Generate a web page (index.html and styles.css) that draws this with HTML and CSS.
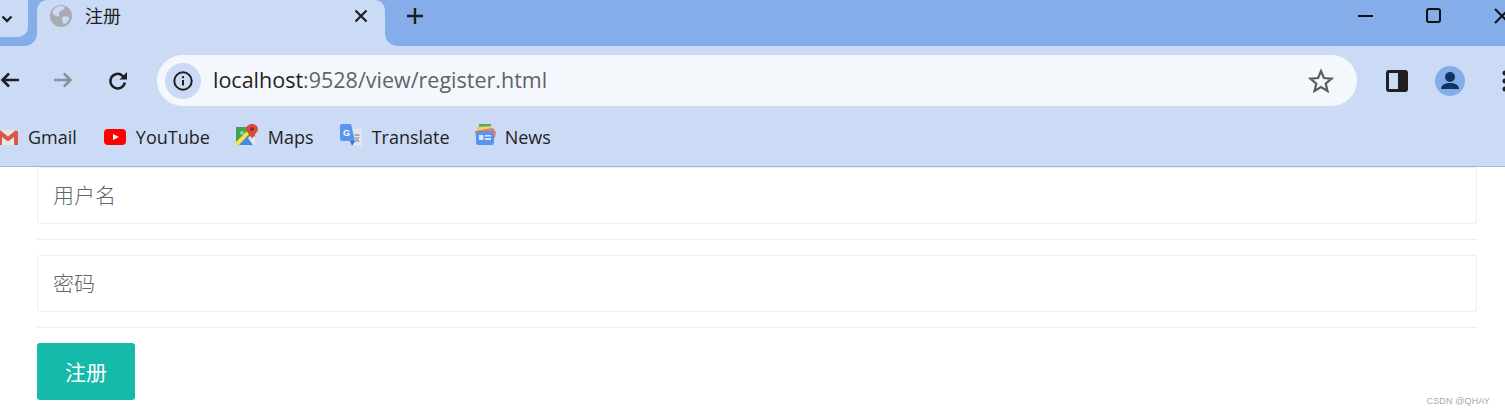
FILE: index.html
```html
<!DOCTYPE html>
<html lang="zh-CN">
<head>
    <meta charset="UTF-8">
    <title>注册</title>
    <link rel="stylesheet" href="styles.css">
</head>
<body>
    <header class="browser">
        <div class="tab-strip">
            <div class="tab-list-btn">
                <svg width="14" height="14" viewBox="0 0 14 14"><path d="M2.500 4.500 7 9l4.500-4.500" fill="none" stroke="#1f1f1f" stroke-width="2.400"/></svg>
            </div>
            <div class="tab">
                <svg class="tab-globe" width="22" height="22" viewBox="0 0 22 22">
                    <circle cx="11" cy="11" r="11" fill="#a9adb3"/>
                    <path d="M6 2.500c2.500-1.500 6-1.800 8.500-.8.300 1.800-1 3.300-3 3.800-1.200 1-2.500 1.500-2.500 3 .8 1.500 0 3.200-1.500 3-2-.5-3.800-1.800-5-3.500.2-2.300 1.500-4.200 3.500-5.500zM13 12c2-.8 4.500-.5 6.500 1-1 3-3 5.200-5.500 6.300-1.300-.8-1-2.500-1.800-3.800-.7-1.200-.2-2.900.8-3.500z" fill="#cbdbf5"/>
                </svg>
                <span class="tab-title">注册</span>
                <svg class="tab-close" width="14" height="14" viewBox="0 0 14 14"><path d="M1.500 1.500l11 11M12.500 1.500l-11 11" stroke="#1f1f1f" stroke-width="2.200"/></svg>
            </div>
            <svg class="new-tab" width="16" height="16" viewBox="0 0 16 16"><path d="M8 0v16M0 8h16" stroke="#1f1f1f" stroke-width="2.400"/></svg>
            <div class="window-btns">
                <svg width="16" height="16" viewBox="0 0 16 16"><path d="M0 8h15" stroke="#111" stroke-width="2"/></svg>
                <svg width="16" height="16" viewBox="0 0 16 16"><rect x="1" y="1" width="13" height="13" rx="2" fill="none" stroke="#111" stroke-width="2"/></svg>
                <svg width="16" height="16" viewBox="0 0 16 16"><path d="M1 1l14 14M15 1 1 15" stroke="#111" stroke-width="2"/></svg>
            </div>
        </div>

        <div class="toolbar">
            <svg class="nav-icon" width="20" height="18" viewBox="0 0 20 18"><path d="M19 9H3M9 2.500 2.500 9 9 15.500" fill="none" stroke="#1f1f1f" stroke-width="2.500"/></svg>
            <svg class="nav-icon" width="20" height="18" viewBox="0 0 20 18"><path d="M1 9h16M11 2.500 17.500 9 11 15.500" fill="none" stroke="#8a8f99" stroke-width="2.500"/></svg>
            <svg class="nav-icon" width="20" height="20" viewBox="0 0 20 20"><path d="M16.800 11.500a7.300 7.300 0 1 1-2.200-6.700L17 7" fill="none" stroke="#1f1f1f" stroke-width="2.500"/><path d="M19 1v7.500h-7.500z" fill="#1f1f1f"/></svg>
            <div class="omnibox">
                <span class="site-info">
                    <svg width="20" height="20" viewBox="0 0 20 20"><circle cx="10" cy="10" r="8.700" fill="none" stroke="#1f1f1f" stroke-width="2"/><path d="M10 9v5.500" stroke="#1f1f1f" stroke-width="2"/><rect x="9" y="5.200" width="2" height="2" fill="#1f1f1f"/></svg>
                </span>
                <span class="url"><span class="url-host">localhost</span>:9528/view/register.html</span>
                <svg class="star" width="26" height="25" viewBox="0 0 26 25"><path d="M13 3l2.900 7 7.600.6-5.800 5 1.800 7.400L13 19.100 6.500 23l1.800-7.400-5.800-5 7.600-.6z" fill="none" stroke="#5a5d63" stroke-width="2.200"/></svg>
            </div>
            <svg class="side-panel" width="22" height="22" viewBox="0 0 22 22"><rect width="22" height="22" rx="3" fill="#1f1f1f"/><rect x="3" y="3" width="9" height="16" fill="#cbdbf5"/></svg>
            <svg class="avatar" width="30" height="30" viewBox="0 0 30 30"><circle cx="15" cy="15" r="15" fill="#84adea"/><circle cx="15" cy="11" r="5" fill="#0f3566"/><path d="M6 23c0-4.500 5-6 9-6s9 1.500 9 6z" fill="#0f3566"/></svg>
            <svg class="menu-dots" width="6" height="22" viewBox="0 0 6 22"><circle cx="3" cy="3" r="2.500" fill="#1f1f1f"/><circle cx="3" cy="11" r="2.500" fill="#1f1f1f"/><circle cx="3" cy="19" r="2.500" fill="#1f1f1f"/></svg>
        </div>

        <nav class="bookmarks">
            <a class="bookmark bm-gmail">
                <svg width="20" height="16" viewBox="0 0 20 16"><path d="M1 1h18v15H1z" fill="#e6e6e6"/><path d="M0 3v13h4V8l6 4.500L16 8v8h4V3l-2-2-8 6.500L2 1z" fill="#d9584a"/></svg>
                Gmail
            </a>
            <a class="bookmark">
                <svg width="22" height="16" viewBox="0 0 22 16"><rect width="22" height="16" rx="4" fill="#f00"/><path d="M9 5l6 3-6 3z" fill="#fff"/></svg>
                YouTube
            </a>
            <a class="bookmark">
                <svg class="bm-tall" width="22" height="22" viewBox="0 0 22 22">
                    <path d="M0 3h19v18H0z" fill="#3aa757"/>
                    <circle cx="6" cy="9" r="2" fill="#8fd19e"/>
                    <path d="M2 21 11 12l8 9z" fill="#4a86e8"/>
                    <path d="M0 18 13 5l2 3L3 21H0z" fill="#fbe14b"/>
                    <path d="M12 14l3-3 4 2v8h-2z" fill="#e4e7ec"/>
                    <path d="M16 0c3.300 0 6 2.300 6 5.200 0 3-4 5-6 9.800-2-4.800-6-6.800-6-9.800C10 2.300 12.700 0 16 0z" fill="#dd4b3e"/>
                    <circle cx="16" cy="5" r="2" fill="#8c2a22"/>
                </svg>
                Maps
            </a>
            <a class="bookmark">
                <svg class="bm-tall" width="22" height="22" viewBox="0 0 22 22">
                    <path d="M9 5h13v17H11z" fill="#e3e5e8"/>
                    <path d="M14 11h6M17 10v2M15 18l4-5M15 13l4 5" stroke="#8b9099" stroke-width="1.200" fill="none"/>
                    <path d="M2 0h9l4 17H2a2 2 0 0 1-2-2V2a2 2 0 0 1 2-2z" fill="#5a94ef"/>
                    <path d="M10 17l2 5 3-5z" fill="#3b6fc4"/>
                    <text class="bm-g" x="3" y="12">G</text>
                </svg>
                Translate
            </a>
            <a class="bookmark">
                <svg class="bm-tall" width="22" height="22" viewBox="0 0 22 22">
                    <path d="M5 0h12v5H5z" fill="#4caf6a"/>
                    <path d="M3 3l15-1 1 5H3z" fill="#f5cf57"/>
                    <path d="M1 7l18-3 3 4-1 6H2z" fill="#ea7a62"/>
                    <rect x="2" y="7" width="18" height="14" rx="2" fill="#5a94ef"/>
                    <path d="M5 11h4.500v5H5zM11 11h6v1.500h-6zM11 14h6v2h-6z" fill="#dbe7fb"/>
                </svg>
                News
            </a>
        </nav>
    </header>

    <main class="page">
        <form class="register-form">
            <div class="form-row">
                <input class="field" type="text" placeholder="用户名">
            </div>
            <div class="form-row">
                <input class="field" type="password" placeholder="密码">
            </div>
            <button class="submit-btn" type="button">注册</button>
        </form>
        <div class="watermark">CSDN @QHAY</div>
    </main>
</body>
</html>
```

FILE: styles.css
```css
* {
    box-sizing: border-box;
}
html, body {
    margin: 0;
    height: 415px;
    overflow: hidden;
    background-color: #ffffff;
}
body {
    font-family: "Open Sans", "Noto Sans CJK SC", sans-serif;
}

/* browser chrome */
.browser {
    height: 167px;
    background-color: #cbdbf5;
    border-bottom: 1px solid #a6b4d0;
}
.tab-strip {
    height: 46px;
    display: flex;
    align-items: center;
    background-color: #84adea;
}
.tab-list-btn {
    width: 28px;
    height: 37px;
    margin-top: -9px;
    display: flex;
    align-items: center;
    background-color: #cbdbf5;
    border-bottom-right-radius: 10px;
}
.tab {
    position: relative;
    width: 348px;
    height: 46px;
    margin-left: 9px;
    padding: 0 17px 14px 13px;
    display: flex;
    align-items: center;
    background-color: #cbdbf5;
    border-top-left-radius: 10px;
    border-top-right-radius: 10px;
}
/* the two concave corners where the tab meets the toolbar */
.tab::before,
.tab::after {
    content: "";
    position: absolute;
    bottom: 0;
    width: 12px;
    height: 12px;
}
.tab::before {
    right: 100%;
    background: radial-gradient(circle at 0 0, transparent 11.500px, #cbdbf5 12px);
}
.tab::after {
    left: 100%;
    background: radial-gradient(circle at 100% 0, transparent 11.500px, #cbdbf5 12px);
}
.tab-title {
    margin-left: 13px;
    margin-top: -2px;
    font-size: 18px;
    color: #1f1f1f;
    font-family: "Noto Sans CJK SC", sans-serif;
}
.tab-close {
    margin-left: auto;
}
.new-tab {
    margin-left: 22px;
    margin-bottom: 15px;
}
.window-btns {
    margin-left: auto;
    margin-bottom: 15px;
    margin-right: -5px;
    display: flex;
    gap: 52px;
}

.toolbar {
    height: 60px;
    padding-top: 9px;
    display: flex;
    align-items: flex-start;
}
.toolbar > * {
    flex-shrink: 0;
}
.nav-icon {
    margin-top: 16px;
}
.nav-icon:nth-child(2) {
    margin-left: 33px;
}
.nav-icon:nth-child(3) {
    margin-left: 35px;
}
.omnibox {
    width: 1200px;
    height: 51px;
    margin-left: 29px;
    padding: 0 23px 0 8px;
    display: flex;
    align-items: center;
    background-color: #f4f7fc;
    border-radius: 26px;
}
.site-info {
    width: 36px;
    height: 36px;
    display: flex;
    align-items: center;
    justify-content: center;
    background-color: #cbdbf5;
    border-radius: 50%;
}
.url {
    margin-left: 12px;
    padding-bottom: 2px;
    font-size: 21.500px;
    color: #5f6368;
}
.url-host {
    color: #1f1f1f;
}
.star {
    margin-left: auto;
}
.side-panel {
    margin: 15px 0 0 29px;
}
.avatar {
    margin: 11px 0 0 27px;
}
.menu-dots {
    margin: 15px 0 0 37px;
}

.bookmarks {
    height: 60px;
    padding-top: 2px;
    margin-left: -2px;
    display: flex;
    align-items: center;
    gap: 26px;
}
.bookmark {
    display: flex;
    align-items: center;
    gap: 10px;
    font-size: 18px;
    color: #1f1f1f;
}
.bm-gmail {
    margin-right: 1px;
}
.bookmark:last-child {
    margin-left: -2px;
    gap: 9px;
}
.bm-tall {
    margin-top: -4px;
}
.bm-g {
    font-family: "Liberation Sans", sans-serif;
    font-size: 9px;
    font-weight: 700;
    fill: #ffffff;
}

/* register form */
.page {
    position: relative;
    height: 248px;
    padding: 0 28px 0 37px;
}
.form-row {
    height: 73px;
    margin-bottom: 15px;
    padding-bottom: 15px;
    border-bottom: 1px solid #eeeeee;
}
.field {
    display: block;
    width: 100%;
    height: 57px;
    padding: 0 15px 3px;
    font-family: "Noto Sans CJK SC", sans-serif;
    font-size: 21px;
    font-weight: 300;
    color: #555555;
    background-color: #ffffff;
    border: 1px solid #eeeeee;
    border-radius: 3px;
    outline: none;
}
.field::placeholder {
    color: #666666;
}
.submit-btn {
    display: block;
    width: 98px;
    height: 57px;
    padding: 0 0 2px;
    font-family: "Noto Sans CJK SC", sans-serif;
    font-size: 21px;
    color: #ffffff;
    background-color: #16baaa;
    border: none;
    border-radius: 3px;
}
.watermark {
    position: absolute;
    right: 15px;
    bottom: 9px;
    font-family: "Liberation Sans", sans-serif;
    font-size: 9px;
    letter-spacing: 0.150px;
    color: #a8a8a8;
}
```
